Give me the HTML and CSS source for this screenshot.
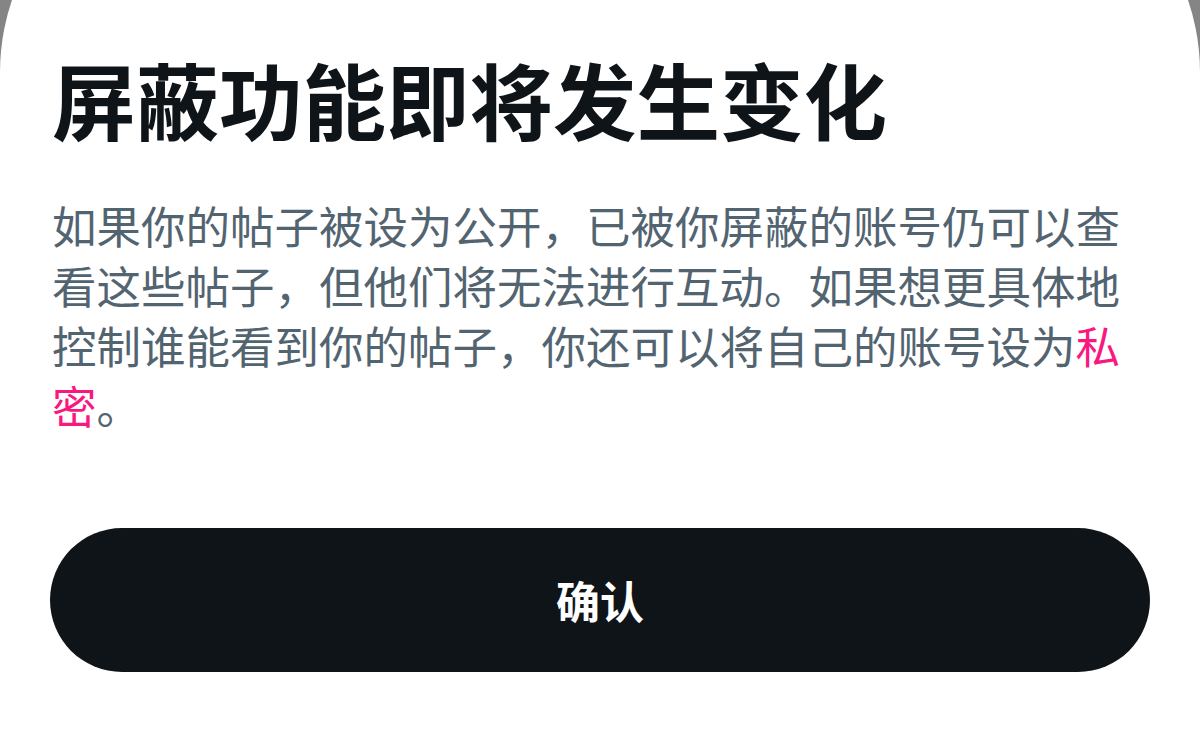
FILE: index.html
```html
<!DOCTYPE html>
<html lang="zh-CN">
<head>
<meta charset="utf-8">
<title>屏蔽功能即将发生变化</title>
<link rel="stylesheet" href="styles.css">
</head>
<body>
<div class="sheet">
  <h1 class="title">屏蔽功能即将发生变化</h1>
  <p class="desc">如果你的帖子被设为公开，已被你屏蔽的账号仍可以查看这些帖子，但他们将无法进行互动。如果想更具体地控制谁能看到你的帖子，你还可以将自己的账号设为<a class="link" href="#">私密</a>。</p>
  <button class="confirm" type="button">确认</button>
</div>
</body>
</html>
```
FILE: styles.css
```css
html, body {
  margin: 0;
  padding: 0;
  height: 100%;
  overflow: hidden;
}
body {
  background: #858585;
  font-family: "Noto Sans CJK SC", "Noto Sans", sans-serif;
}
.sheet {
  box-sizing: border-box;
  margin-top: -150px;
  background: #ffffff;
  border-radius: 222px 222px 0 0;
  padding: 198px 52px 0 52px;
  height: calc(100% + 150px);
  display: flex;
  flex-direction: column;
}
.title {
  margin: 0;
  font-size: 83.5px;
  line-height: 100px;
  font-weight: 700;
  color: #0f1419;
}
.desc {
  margin: 47px 0 0 0;
  font-size: 44.5px;
  line-height: 60px;
  font-weight: 400;
  color: #536471;
}
.link {
  color: #f91880;
  text-decoration: none;
}
.confirm {
  margin: 93px -2px 0 -2px;
  height: 144px;
  flex: none;
  border: none;
  border-radius: 72px;
  background: #0f1419;
  color: #ffffff;
  font-family: "Noto Sans CJK SC", "Noto Sans", sans-serif;
  font-size: 44px;
  font-weight: 700;
  cursor: pointer;
}
```
